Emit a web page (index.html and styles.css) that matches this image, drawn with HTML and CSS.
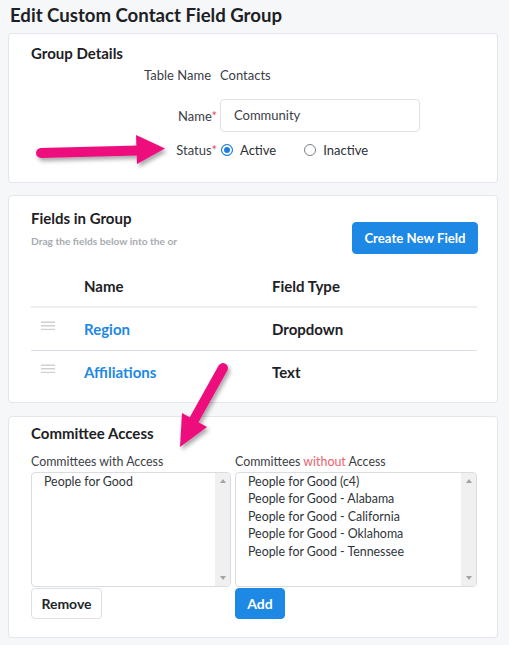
FILE: index.html
```html
<!DOCTYPE html>
<html>
<head>
<meta charset="utf-8">
<link rel="stylesheet" href="styles.css">
</head>
<body>
<div class="page">
  <h1 class="title">Edit Custom Contact Field Group</h1>

  <section class="card card-details">
    <h2 class="card-title">Group Details</h2>
    <div class="form">
      <div class="label">Table Name</div>
      <div class="value">Contacts</div>
      <div class="label label-input">Name<span class="req">*</span></div>
      <div class="input">Community</div>
      <div class="label">Status<span class="req">*</span></div>
      <div class="radios">
        <span class="radio-opt"><span class="radio checked"></span>Active</span>
        <span class="radio-opt"><span class="radio"></span>Inactive</span>
      </div>
    </div>
  </section>

  <section class="card card-fields">
    <div class="fields-head">
      <div class="fields-heading">
        <h2 class="card-title">Fields in Group</h2>
        <div class="hint">Drag the fields below into the or</div>
      </div>
      <button class="btn btn-primary btn-create">Create New Field</button>
    </div>
    <div class="table">
      <div class="tr th">
        <div></div>
        <div>Name</div>
        <div>Field Type</div>
      </div>
      <div class="tr">
        <div class="handle"><svg width="14" height="10" viewBox="0 0 14 10"><path d="M0 1.2H14M0 4.8H14M0 8.4H14" stroke="#cdd1d6" stroke-width="1.4"/></svg></div>
        <div class="link">Region</div>
        <div class="type">Dropdown</div>
      </div>
      <div class="tr last">
        <div class="handle"><svg width="14" height="10" viewBox="0 0 14 10"><path d="M0 1.2H14M0 4.8H14M0 8.4H14" stroke="#cdd1d6" stroke-width="1.4"/></svg></div>
        <div class="link">Affiliations</div>
        <div class="type">Text</div>
      </div>
    </div>
  </section>

  <section class="card card-access">
    <h2 class="card-title">Committee Access</h2>
    <div class="access">
      <div class="col">
        <div class="list-label">Committees with Access</div>
        <div class="listbox">
          <div class="items">
            <div>People for Good</div>
          </div>
          <div class="scrollbar"><span class="arr up"></span><span class="arr down"></span></div>
        </div>
        <button class="btn btn-default">Remove</button>
      </div>
      <div class="col">
        <div class="list-label">Committees <span class="red">without</span> Access</div>
        <div class="listbox">
          <div class="items">
            <div>People for Good (c4)</div>
            <div>People for Good - Alabama</div>
            <div>People for Good - California</div>
            <div>People for Good - Oklahoma</div>
            <div>People for Good - Tennessee</div>
          </div>
          <div class="scrollbar"><span class="arr up"></span><span class="arr down"></span></div>
        </div>
        <button class="btn btn-primary btn-add">Add</button>
      </div>
    </div>
  </section>

  <svg class="arrows" width="509" height="645" viewBox="0 0 509 645">
    <defs>
      <filter id="sh" x="-20%" y="-20%" width="140%" height="140%">
        <feDropShadow dx="2" dy="3" stdDeviation="2" flood-color="#000" flood-opacity="0.35"/>
      </filter>
    </defs>
    <g fill="#ee0d7d" stroke="none" filter="url(#sh)">
      <path d="M41 153 L139 150.5" stroke="#ee0d7d" stroke-width="10" stroke-linecap="round"/>
      <polygon points="136,135 165,148.5 137,164"/>
      <path d="M223 368 L194 420" stroke="#ee0d7d" stroke-width="10" stroke-linecap="round"/>
      <polygon points="182,413 207,427 180,447"/>
    </g>
  </svg>
</div>
</body>
</html>
```

FILE: styles.css
```css
* { box-sizing: border-box; }
html, body { margin: 0; padding: 0; }
body {
  background: #f6f7f9;
  font-family: Lato, "Open Sans", sans-serif;
  color: #212529;
  width: 509px;
  height: 645px;
  overflow: hidden;
}
.page {
  position: relative;
  padding: 0 11px 0 8px;
}
.title {
  margin: 0;
  padding: 3px 0 0 2px;
  height: 33px;
  font-size: 18.6px;
  line-height: 24px;
  font-weight: 700;
  color: #1d2125;
}
.card {
  background: #fff;
  border: 1px solid #e3e6ea;
  border-radius: 4px;
  padding: 0 19px 0 22px;
}
.card-title {
  margin: 0;
  font-size: 15px;
  line-height: 20px;
  font-weight: 700;
  color: #1d2125;
}
/* group details */
.card-details {
  height: 150px;
  padding-top: 9px;
}
.form {
  display: grid;
  grid-template-columns: 180px 200px;
  column-gap: 9px;
  align-items: center;
  margin-top: 2px;
  font-size: 13px;
  color: #3b4046;
}
.label {
  text-align: right;
  line-height: 20px;
}
.req {
  color: #e2505c;
  margin-right: -6px;
}
.value { line-height: 20px; }
.label-input, .input { margin-top: 14px; }
.input {
  height: 33px;
  border: 1px solid #dee2e6;
  border-radius: 4px;
  padding-left: 13px;
  line-height: 31px;
  color: #3b4046;
}
.form .label:nth-last-child(2), .radios { margin-top: 8px; }
.radios {
  display: flex;
  align-items: center;
  line-height: 20px;
  color: #2b3035;
}
.radio-opt {
  display: inline-flex;
  align-items: center;
}
.radio-opt + .radio-opt { margin-left: 27px; }
.radio {
  width: 12px;
  height: 12px;
  border-radius: 50%;
  border: 1px solid #7b8188;
  margin-right: 7px;
  margin-left: 1px;
}
.radio.checked {
  border-color: #1c7fe0;
  background: #1c7fe0;
  box-shadow: inset 0 0 0 2px #fff;
}
/* fields */
.card-fields {
  margin-top: 12px;
  height: 208px;
  padding-top: 12px;
}
.fields-head {
  display: flex;
  justify-content: space-between;
  align-items: flex-start;
}
.fields-heading { width: 160px; }
.hint {
  margin-top: 6px;
  font-size: 10.2px;
  line-height: 14px;
  font-weight: 700;
  color: #a7abb0;
  white-space: nowrap;
}
.btn {
  font-family: inherit;
  border-radius: 4px;
  font-weight: 700;
  font-size: 14px;
  padding: 0;
  cursor: pointer;
}
.btn-primary {
  background: #1e88e5;
  border: 1px solid #1e88e5;
  color: #fff;
}
.btn-create {
  margin-top: 14px;
  width: 126px;
  height: 32px;
  font-size: 13.2px;
}
.table {
  margin-top: 11px;
  width: 446px;
}
.tr {
  display: grid;
  grid-template-columns: 53px 188px 1fr;
  height: 43px;
  align-items: center;
  border-bottom: 1px solid #dae0e6;
  font-size: 15px;
  font-weight: 700;
}
.tr.th {
  height: 43px;
  border-bottom: 2px solid #eceef1;
  color: #1d2125;
}
.tr.last { border-bottom: none; height: 42px; }
.handle {
  align-self: start;
  padding: 13px 0 0 10px;
  line-height: 0;
}
.link { color: #1e88e5; }
.type { color: #1d2125; }
/* access */
.card-access {
  margin-top: 13px;
  height: 222px;
  padding-top: 6px;
}
.access {
  display: grid;
  grid-template-columns: 200px 242px;
  column-gap: 4px;
  margin-top: 11px;
}
.list-label {
  font-size: 12.4px;
  line-height: 16px;
  color: #3b4046;
}
.red { color: #f2606c; }
.listbox {
  margin-top: 2px;
  height: 115px;
  border: 1px solid #d9dde1;
  border-radius: 4px;
  display: flex;
  overflow: hidden;
}
.items {
  flex: 1;
  padding: 0 0 0 12px;
  font-size: 12.4px;
  line-height: 17.4px;
  color: #2f343a;
}
.scrollbar {
  width: 15px;
  background: #f0f0f0;
  display: flex;
  flex-direction: column;
  justify-content: space-between;
  align-items: center;
  padding: 6px 0 6px;
}
.arr {
  width: 0;
  height: 0;
  border-left: 3.5px solid transparent;
  border-right: 3.5px solid transparent;
}
.arr.up { border-bottom: 4px solid #a3a3a3; }
.arr.down { border-top: 4px solid #a3a3a3; }
.col .btn { margin-top: 1px; height: 31px; }
.btn-default {
  width: 71px;
  background: #fff;
  border: 1px solid #dcdfe3;
  color: #22262a;
}
.btn-add { width: 50px; }
.arrows {
  position: absolute;
  left: 0;
  top: 0;
  pointer-events: none;
}
```
